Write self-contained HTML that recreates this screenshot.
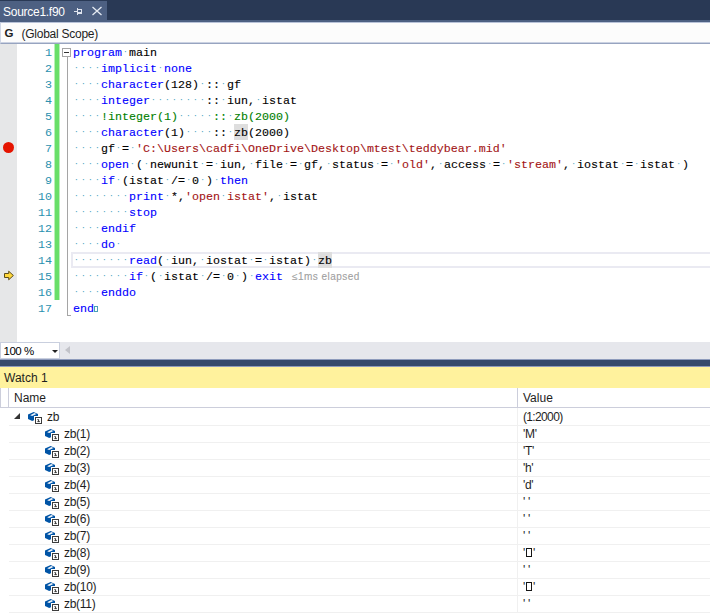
<!DOCTYPE html>
<html><head><meta charset="utf-8"><title>Source1.f90</title>
<style>
*{box-sizing:border-box;margin:0;padding:0}
html,body{width:710px;height:613px;overflow:hidden;background:#fff}
body{position:relative;font-family:"Liberation Sans",sans-serif;font-size:12px;color:#1e1e1e}
.abs{position:absolute}
#topbar{left:0;top:0;width:710px;height:22px;background:#293955}
#tab{left:0;top:1px;width:107px;height:20px;background:#4d6082;color:#fff}
#tabline{left:0;top:20px;width:710px;height:2px;background:#4d6082}
#nav{left:0;top:22px;width:710px;height:22px;background:#fcfcfc;border-top:1px solid #b8c2d8;border-left:1px solid #cfd6e5;border-bottom:1px solid #97a4c0;box-shadow:inset 0 -1px 0 #cbd2e2}
#gutter{left:0;top:44px;width:17px;height:298px;background:#e6e7e8}
#green{left:54px;top:44px;width:6px;height:256px;background:linear-gradient(to right,#b9efb9 0,#b9efb9 1px,#69df69 1px,#69df69 5px,#b9efb9 5px,#b9efb9 6px)}
.ln{position:absolute;left:17px;width:35px;text-align:right;color:#2b91af;font-family:"Liberation Mono",monospace;font-size:11.667px;height:16px;line-height:16px;margin-top:0.5px}
.cl{position:absolute;left:73px;height:16px;line-height:16px;white-space:pre;font-family:"Liberation Mono",monospace;font-size:11.667px;color:#000;margin-top:0.5px;-webkit-text-stroke:0.1px}
.k{color:#0000ff}.s{color:#a31515}.c{color:#008000}
.w{color:#3d9dbb;font-size:8px;letter-spacing:2.2px;position:relative;left:1.1px;top:-1.7px;-webkit-text-stroke:0}
.h{background:#dedede;padding-top:2px}
.el{font-family:"Liberation Sans",sans-serif;font-size:10px;color:#a0a0a0;letter-spacing:0.45px;margin-left:9px}
.eof{display:inline-block;width:4px;height:6px;border:1px solid #4a9fb5;margin-left:0;vertical-align:0}
#curline{left:71px;top:252px;width:645px;height:16px;border:2px solid #eaeaf2}
#obox{left:62px;top:48px;width:9px;height:9px;border:1px solid #a5a5a5;background:#fff}
#ominus{left:64px;top:52px;width:5px;height:1px;background:#333}
#oline{left:67px;top:57px;width:1px;height:259px;background:#a5a5a5}
#otick{left:67px;top:315px;width:4px;height:1px;background:#a5a5a5}
#bp{left:3px;top:142px;width:11px;height:11px;border-radius:50%;background:#e51400}
#hbar{left:0;top:342px;width:710px;height:17px;background:#e6e7ec}
#zoom{left:0;top:342px;width:60px;height:17px;background:#fff;border:1px solid #c9cfde}
#darkbar{left:0;top:359px;width:710px;height:8px;background:#35496b;border-top:1px solid #8e9bbc;border-bottom:1px solid #8e9bbc}
#wtitle{left:0;top:367px;width:710px;height:21px;background:#fff29d}
#whead{left:0;top:388px;width:710px;height:20px;background:#fff;border-bottom:1px solid #cccedb}
.vl{position:absolute;width:1px;background:#cccedb}
.wt{position:absolute;height:17px;line-height:17px;white-space:nowrap;margin-top:1px;letter-spacing:-0.3px}
.wi{position:absolute;width:16px;height:16px}
.ic{display:block}
.bx{display:inline-block;width:6px;height:9px;border:1px solid #151515;color:transparent;overflow:hidden;vertical-align:0;margin:0 1px 0 1px;font-size:4px;line-height:7px}
.rl{position:absolute;left:9px;width:701px;height:1px;background:#f0f0f0}
.exp{position:absolute;left:14px;width:0;height:0;border-left:6px solid transparent;border-bottom:6px solid #333}
</style></head><body>
<div class="abs" id="topbar"></div>
<div class="abs" id="tab"><span class="abs" style="left:3px;top:4px;white-space:nowrap;letter-spacing:-0.27px">Source1.f90</span>
<svg class="abs" style="left:73px;top:6px" width="10" height="9" viewBox="73 7 10 9" shape-rendering="crispEdges"><path d="M74 11.5 H77 M77.5 8 V15 M78 9.5 H82 M81.5 9 V14 M78 13 H82" stroke="#dfe4ee" stroke-width="1" fill="none"/><path d="M78 13 H82" stroke="#dfe4ee" stroke-width="2" fill="none"/></svg>
<svg class="abs" style="left:91px;top:5px" width="12" height="10" viewBox="91 6 12 10"><path d="M92.5 7 L101.5 15 M101.5 7 L92.5 15" stroke="#e6ebf3" stroke-width="1.3" fill="none"/></svg>
</div>
<div class="abs" id="tabline"></div>
<div class="abs" id="nav"><b class="abs" style="left:3.5px;top:4px;font-size:11.5px">G</b><span class="abs" style="left:20.5px;top:4px;white-space:nowrap;letter-spacing:-0.25px">(Global Scope)</span></div>
<div class="abs" id="gutter"></div>
<div class="abs" id="green"></div>
<div class="abs" id="curline"></div>
<div class="abs" id="oline"></div><div class="abs" id="otick"></div>
<div class="abs" id="obox"></div><div class="abs" id="ominus"></div>
<div class="abs" id="bp"></div>
<svg class="abs" style="left:3px;top:269px" width="12" height="13" viewBox="0 0 12 13"><path d="M1.5 4.5 H5.7 V2.2 L10.4 6.5 L5.7 10.8 V8.5 H1.5 Z" fill="#ffd83a" stroke="#5c4d1c" stroke-width="1" stroke-linejoin="round"/></svg>
<div class="ln" style="top:44px">1</div><div class="cl" style="top:44px"><span class="k">program</span><span class="w">·</span>main</div>
<div class="ln" style="top:60px">2</div><div class="cl" style="top:60px"><span class="w">····</span><span class="k">implicit</span><span class="w">·</span><span class="k">none</span></div>
<div class="ln" style="top:76px">3</div><div class="cl" style="top:76px"><span class="w">····</span><span class="k">character</span>(128)<span class="w">·</span>::<span class="w">·</span>gf</div>
<div class="ln" style="top:92px">4</div><div class="cl" style="top:92px"><span class="w">····</span><span class="k">integer</span><span class="w">········</span>::<span class="w">·</span>iun,<span class="w">·</span>istat</div>
<div class="ln" style="top:108px">5</div><div class="cl" style="top:108px"><span class="w">····</span><span class="c">!integer(1)</span><span class="w">·····</span><span class="c">::</span><span class="w">·</span><span class="c">zb(2000)</span></div>
<div class="ln" style="top:124px">6</div><div class="cl" style="top:124px"><span class="w">····</span><span class="k">character</span>(1)<span class="w">····</span>::<span class="w">·</span><span class="h">zb</span>(2000)</div>
<div class="ln" style="top:140px">7</div><div class="cl" style="top:140px"><span class="w">····</span>gf<span class="w">·</span>=<span class="w">·</span><span class="s">'C:\Users\cadfi\OneDrive\Desktop\mtest\teddybear.mid'</span></div>
<div class="ln" style="top:156px">8</div><div class="cl" style="top:156px"><span class="w">····</span><span class="k">open</span><span class="w">·</span>(<span class="w">·</span>newunit<span class="w">·</span>=<span class="w">·</span>iun,<span class="w">·</span>file<span class="w">·</span>=<span class="w">·</span>gf,<span class="w">·</span>status<span class="w">·</span>=<span class="w">·</span><span class="s">'old'</span>,<span class="w">·</span>access<span class="w">·</span>=<span class="w">·</span><span class="s">'stream'</span>,<span class="w">·</span>iostat<span class="w">·</span>=<span class="w">·</span>istat<span class="w">·</span>)</div>
<div class="ln" style="top:172px">9</div><div class="cl" style="top:172px"><span class="w">····</span><span class="k">if</span><span class="w">·</span>(istat<span class="w">·</span>/=<span class="w">·</span>0<span class="w">·</span>)<span class="w">·</span><span class="k">then</span></div>
<div class="ln" style="top:188px">10</div><div class="cl" style="top:188px"><span class="w">········</span><span class="k">print</span><span class="w">·</span>*,<span class="s">'open<span class="w">·</span>istat'</span>,<span class="w">·</span>istat</div>
<div class="ln" style="top:204px">11</div><div class="cl" style="top:204px"><span class="w">········</span><span class="k">stop</span></div>
<div class="ln" style="top:220px">12</div><div class="cl" style="top:220px"><span class="w">····</span><span class="k">endif</span></div>
<div class="ln" style="top:236px">13</div><div class="cl" style="top:236px"><span class="w">····</span><span class="k">do</span><span class="w">·</span></div>
<div class="ln" style="top:252px">14</div><div class="cl" style="top:252px"><span class="w">········</span><span class="k">read</span>(<span class="w">·</span>iun,<span class="w">·</span>iostat<span class="w">·</span>=<span class="w">·</span>istat)<span class="w">·</span><span class="h">zb</span></div>
<div class="ln" style="top:268px">15</div><div class="cl" style="top:268px"><span class="w">········</span><span class="k">if</span><span class="w">·</span>(<span class="w">·</span>istat<span class="w">·</span>/=<span class="w">·</span>0<span class="w">·</span>)<span class="w">·</span><span class="k">exit</span><span class="el">≤1ms elapsed</span></div>
<div class="ln" style="top:284px">16</div><div class="cl" style="top:284px"><span class="w">····</span><span class="k">enddo</span></div>
<div class="ln" style="top:300px">17</div><div class="cl" style="top:300px"><span class="k">end</span><span class="eof"></span></div>

<div class="abs" id="hbar"></div>
<div class="abs" id="zoom"><span class="abs" style="left:2.5px;top:1.5px;color:#000;font-size:11.5px;letter-spacing:-0.5px">100 %</span><span class="abs" style="left:51px;top:7px;width:0;height:0;border-left:3px solid transparent;border-right:3px solid transparent;border-top:3px solid #222"></span></div>
<span class="abs" style="left:65px;top:346px;width:0;height:0;border-top:4px solid transparent;border-bottom:4px solid transparent;border-right:5px solid #c2c3c9"></span>
<div class="abs" id="darkbar"></div>
<div class="abs" id="wtitle"><span class="abs" style="left:4px;top:4px;color:#1e1e1e">Watch 1</span></div>
<div class="abs" id="whead"><span class="abs" style="left:14px;top:3px">Name</span><span class="abs" style="left:523px;top:3px">Value</span></div>
<div class="vl" style="left:0;top:388px;height:20px"></div>
<div class="vl" style="left:8px;top:388px;height:20px"></div>
<div class="vl" style="left:517px;top:388px;height:20px"></div>
<div class="vl" style="left:517px;top:408px;height:205px;background:#f0f0f0"></div>
<span class="exp" style="top:413px"></span><span class="wi" style="left:28px;top:408px;margin-top:4px"><svg class="ic" width="16" height="14" viewBox="0 0 16 14"><path d="M0 2.6 L5.6 0 L10 2 L10 6.5 L4.2 9 L0 7 Z" fill="#0054a6"/><path d="M2.2 3.2 L6.4 1.1 L8.4 2 L4.2 4.1 Z" fill="#f2f6fb"/><rect x="6" y="4" width="9" height="9" fill="#fff"/><rect x="7.5" y="5.5" width="6" height="6" fill="#fff" stroke="#3c3c3c" stroke-width="1"/><path d="M9.4 7.6 H10.6 V9.6 M9.4 9.6 H11.8" fill="none" stroke="#333" stroke-width="1"/></svg></span><span class="wt" style="left:47px;top:408px">zb</span><span class="wt" style="left:523px;top:408px"><span style="letter-spacing:-0.65px">(1:2000)</span></span><div class="rl" style="top:425px"></div>
<span class="wi" style="left:45px;top:425px;margin-top:4px"><svg class="ic" width="16" height="14" viewBox="0 0 16 14"><path d="M0 2.6 L5.6 0 L10 2 L10 6.5 L4.2 9 L0 7 Z" fill="#0054a6"/><path d="M2.2 3.2 L6.4 1.1 L8.4 2 L4.2 4.1 Z" fill="#f2f6fb"/><rect x="6" y="4" width="9" height="9" fill="#fff"/><rect x="7.5" y="5.5" width="6" height="6" fill="#fff" stroke="#3c3c3c" stroke-width="1"/><path d="M9.4 7.6 H10.6 V9.6 M9.4 9.6 H11.8" fill="none" stroke="#333" stroke-width="1"/></svg></span><span class="wt" style="left:64px;top:425px">zb(1)</span><span class="wt" style="left:523px;top:425px">'M'</span><div class="rl" style="top:442px"></div>
<span class="wi" style="left:45px;top:442px;margin-top:4px"><svg class="ic" width="16" height="14" viewBox="0 0 16 14"><path d="M0 2.6 L5.6 0 L10 2 L10 6.5 L4.2 9 L0 7 Z" fill="#0054a6"/><path d="M2.2 3.2 L6.4 1.1 L8.4 2 L4.2 4.1 Z" fill="#f2f6fb"/><rect x="6" y="4" width="9" height="9" fill="#fff"/><rect x="7.5" y="5.5" width="6" height="6" fill="#fff" stroke="#3c3c3c" stroke-width="1"/><path d="M9.4 7.6 H10.6 V9.6 M9.4 9.6 H11.8" fill="none" stroke="#333" stroke-width="1"/></svg></span><span class="wt" style="left:64px;top:442px">zb(2)</span><span class="wt" style="left:523px;top:442px">'T'</span><div class="rl" style="top:459px"></div>
<span class="wi" style="left:45px;top:459px;margin-top:4px"><svg class="ic" width="16" height="14" viewBox="0 0 16 14"><path d="M0 2.6 L5.6 0 L10 2 L10 6.5 L4.2 9 L0 7 Z" fill="#0054a6"/><path d="M2.2 3.2 L6.4 1.1 L8.4 2 L4.2 4.1 Z" fill="#f2f6fb"/><rect x="6" y="4" width="9" height="9" fill="#fff"/><rect x="7.5" y="5.5" width="6" height="6" fill="#fff" stroke="#3c3c3c" stroke-width="1"/><path d="M9.4 7.6 H10.6 V9.6 M9.4 9.6 H11.8" fill="none" stroke="#333" stroke-width="1"/></svg></span><span class="wt" style="left:64px;top:459px">zb(3)</span><span class="wt" style="left:523px;top:459px">'h'</span><div class="rl" style="top:476px"></div>
<span class="wi" style="left:45px;top:476px;margin-top:4px"><svg class="ic" width="16" height="14" viewBox="0 0 16 14"><path d="M0 2.6 L5.6 0 L10 2 L10 6.5 L4.2 9 L0 7 Z" fill="#0054a6"/><path d="M2.2 3.2 L6.4 1.1 L8.4 2 L4.2 4.1 Z" fill="#f2f6fb"/><rect x="6" y="4" width="9" height="9" fill="#fff"/><rect x="7.5" y="5.5" width="6" height="6" fill="#fff" stroke="#3c3c3c" stroke-width="1"/><path d="M9.4 7.6 H10.6 V9.6 M9.4 9.6 H11.8" fill="none" stroke="#333" stroke-width="1"/></svg></span><span class="wt" style="left:64px;top:476px">zb(4)</span><span class="wt" style="left:523px;top:476px">'d'</span><div class="rl" style="top:493px"></div>
<span class="wi" style="left:45px;top:493px;margin-top:4px"><svg class="ic" width="16" height="14" viewBox="0 0 16 14"><path d="M0 2.6 L5.6 0 L10 2 L10 6.5 L4.2 9 L0 7 Z" fill="#0054a6"/><path d="M2.2 3.2 L6.4 1.1 L8.4 2 L4.2 4.1 Z" fill="#f2f6fb"/><rect x="6" y="4" width="9" height="9" fill="#fff"/><rect x="7.5" y="5.5" width="6" height="6" fill="#fff" stroke="#3c3c3c" stroke-width="1"/><path d="M9.4 7.6 H10.6 V9.6 M9.4 9.6 H11.8" fill="none" stroke="#333" stroke-width="1"/></svg></span><span class="wt" style="left:64px;top:493px">zb(5)</span><span class="wt" style="left:523px;top:493px">' '</span><div class="rl" style="top:510px"></div>
<span class="wi" style="left:45px;top:510px;margin-top:4px"><svg class="ic" width="16" height="14" viewBox="0 0 16 14"><path d="M0 2.6 L5.6 0 L10 2 L10 6.5 L4.2 9 L0 7 Z" fill="#0054a6"/><path d="M2.2 3.2 L6.4 1.1 L8.4 2 L4.2 4.1 Z" fill="#f2f6fb"/><rect x="6" y="4" width="9" height="9" fill="#fff"/><rect x="7.5" y="5.5" width="6" height="6" fill="#fff" stroke="#3c3c3c" stroke-width="1"/><path d="M9.4 7.6 H10.6 V9.6 M9.4 9.6 H11.8" fill="none" stroke="#333" stroke-width="1"/></svg></span><span class="wt" style="left:64px;top:510px">zb(6)</span><span class="wt" style="left:523px;top:510px">' '</span><div class="rl" style="top:527px"></div>
<span class="wi" style="left:45px;top:527px;margin-top:4px"><svg class="ic" width="16" height="14" viewBox="0 0 16 14"><path d="M0 2.6 L5.6 0 L10 2 L10 6.5 L4.2 9 L0 7 Z" fill="#0054a6"/><path d="M2.2 3.2 L6.4 1.1 L8.4 2 L4.2 4.1 Z" fill="#f2f6fb"/><rect x="6" y="4" width="9" height="9" fill="#fff"/><rect x="7.5" y="5.5" width="6" height="6" fill="#fff" stroke="#3c3c3c" stroke-width="1"/><path d="M9.4 7.6 H10.6 V9.6 M9.4 9.6 H11.8" fill="none" stroke="#333" stroke-width="1"/></svg></span><span class="wt" style="left:64px;top:527px">zb(7)</span><span class="wt" style="left:523px;top:527px">' '</span><div class="rl" style="top:544px"></div>
<span class="wi" style="left:45px;top:544px;margin-top:4px"><svg class="ic" width="16" height="14" viewBox="0 0 16 14"><path d="M0 2.6 L5.6 0 L10 2 L10 6.5 L4.2 9 L0 7 Z" fill="#0054a6"/><path d="M2.2 3.2 L6.4 1.1 L8.4 2 L4.2 4.1 Z" fill="#f2f6fb"/><rect x="6" y="4" width="9" height="9" fill="#fff"/><rect x="7.5" y="5.5" width="6" height="6" fill="#fff" stroke="#3c3c3c" stroke-width="1"/><path d="M9.4 7.6 H10.6 V9.6 M9.4 9.6 H11.8" fill="none" stroke="#333" stroke-width="1"/></svg></span><span class="wt" style="left:64px;top:544px">zb(8)</span><span class="wt" style="left:523px;top:544px">'<span class="bx">▯</span>'</span><div class="rl" style="top:561px"></div>
<span class="wi" style="left:45px;top:561px;margin-top:4px"><svg class="ic" width="16" height="14" viewBox="0 0 16 14"><path d="M0 2.6 L5.6 0 L10 2 L10 6.5 L4.2 9 L0 7 Z" fill="#0054a6"/><path d="M2.2 3.2 L6.4 1.1 L8.4 2 L4.2 4.1 Z" fill="#f2f6fb"/><rect x="6" y="4" width="9" height="9" fill="#fff"/><rect x="7.5" y="5.5" width="6" height="6" fill="#fff" stroke="#3c3c3c" stroke-width="1"/><path d="M9.4 7.6 H10.6 V9.6 M9.4 9.6 H11.8" fill="none" stroke="#333" stroke-width="1"/></svg></span><span class="wt" style="left:64px;top:561px">zb(9)</span><span class="wt" style="left:523px;top:561px">' '</span><div class="rl" style="top:578px"></div>
<span class="wi" style="left:45px;top:578px;margin-top:4px"><svg class="ic" width="16" height="14" viewBox="0 0 16 14"><path d="M0 2.6 L5.6 0 L10 2 L10 6.5 L4.2 9 L0 7 Z" fill="#0054a6"/><path d="M2.2 3.2 L6.4 1.1 L8.4 2 L4.2 4.1 Z" fill="#f2f6fb"/><rect x="6" y="4" width="9" height="9" fill="#fff"/><rect x="7.5" y="5.5" width="6" height="6" fill="#fff" stroke="#3c3c3c" stroke-width="1"/><path d="M9.4 7.6 H10.6 V9.6 M9.4 9.6 H11.8" fill="none" stroke="#333" stroke-width="1"/></svg></span><span class="wt" style="left:64px;top:578px">zb(10)</span><span class="wt" style="left:523px;top:578px">'<span class="bx">▯</span>'</span><div class="rl" style="top:595px"></div>
<span class="wi" style="left:45px;top:595px;margin-top:4px"><svg class="ic" width="16" height="14" viewBox="0 0 16 14"><path d="M0 2.6 L5.6 0 L10 2 L10 6.5 L4.2 9 L0 7 Z" fill="#0054a6"/><path d="M2.2 3.2 L6.4 1.1 L8.4 2 L4.2 4.1 Z" fill="#f2f6fb"/><rect x="6" y="4" width="9" height="9" fill="#fff"/><rect x="7.5" y="5.5" width="6" height="6" fill="#fff" stroke="#3c3c3c" stroke-width="1"/><path d="M9.4 7.6 H10.6 V9.6 M9.4 9.6 H11.8" fill="none" stroke="#333" stroke-width="1"/></svg></span><span class="wt" style="left:64px;top:595px">zb(11)</span><span class="wt" style="left:523px;top:595px">' '</span><div class="rl" style="top:612px"></div>

</body></html>
